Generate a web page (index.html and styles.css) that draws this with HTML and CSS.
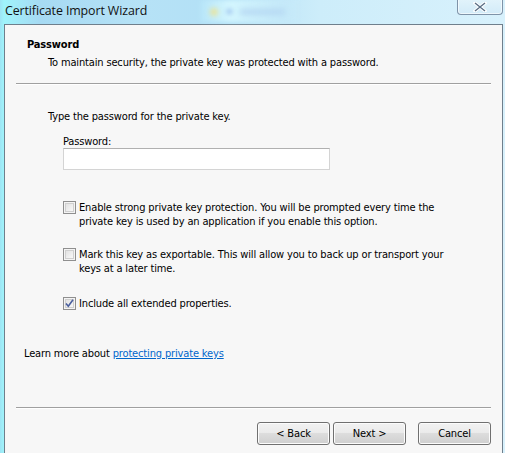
FILE: index.html
```html
<!DOCTYPE html>
<html>
<head>
<meta charset="utf-8">
<link rel="stylesheet" href="styles.css">
</head>
<body>
<div class="window">
  <div class="titlebar">
    <span class="title">Certificate Import Wizard</span>
    <div class="glow"><span class="g1"></span><span class="g2"></span><span class="g3"></span></div>
    <div class="close"><svg width="14" height="10" viewBox="0 0 14 10"><path d="M2 1 L12 9 M12 1 L2 9" stroke="#fff" stroke-width="3.2" stroke-linecap="square"/><path d="M2 1 L12 9 M12 1 L2 9" stroke="#5b6f86" stroke-width="1.4"/></svg></div>
  </div>
  <div class="client">
    <div class="header">
      <div class="h-title">Password</div>
      <div class="h-sub">To maintain security, the private key was protected with a password.</div>
    </div>
    <div class="sep"></div>
    <div class="body">
      <div class="intro">Type the password for the private key.</div>
      <div class="field">
        <label class="lbl">Password:</label>
        <div class="input"></div>
      </div>
      <div class="opt first">
        <span class="cb"></span>
        <span class="otext">Enable strong private key protection. You will be prompted every time the<br>private key is used by an application if you enable this option.</span>
      </div>
      <div class="opt second">
        <span class="cb"></span>
        <span class="otext">Mark this key as exportable. This will allow you to back up or transport your<br>keys at a later time.</span>
      </div>
      <div class="opt third">
        <span class="cb checked"><svg width="11" height="11" viewBox="0 0 11 11"><path d="M2 5.5 L4.3 8.3 L9 1.8" fill="none" stroke="#4a5f9e" stroke-width="1.6"/></svg></span>
        <span class="otext">Include all extended properties.</span>
      </div>
      <div class="learn">Learn more about <a class="link" href="#">protecting private keys</a></div>
    </div>
    <div class="sep"></div>
    <div class="buttons">
      <div class="btn">&lt; Back</div>
      <div class="btn">Next &gt;</div>
      <div class="btn cancel">Cancel</div>
    </div>
  </div>
</div>
</body>
</html>
```
FILE: styles.css
```css
html, body {
  margin: 0;
  padding: 0;
  width: 505px;
  height: 453px;
  overflow: hidden;
}
.window {
  width: 505px;
  height: 453px;
  box-sizing: border-box;
  background: linear-gradient(90deg, #9ee4f4 0px, #9ff4fb 4px, #a6daf3 40px, #b6e2f6 140px, #b3e0f6 220px, #cdedfa 320px, #d8f1fc 505px);
  padding: 0 2px 0 4px;
  display: flex;
  flex-direction: column;
  font-family: Tahoma, "DejaVu Sans Condensed", "Liberation Sans", sans-serif;
  font-size: 11px;
  letter-spacing: -0.15px;
  color: #000;
}
.titlebar {
  height: 24px;
  position: relative;
  display: flex;
  align-items: flex-start;
}
.title {
  font-family: "Open Sans", "Noto Sans", sans-serif;
  font-size: 12.4px;
  color: #111;
  margin: 2px 0 0 1px;
  letter-spacing: -0.1px;
  position: relative;
  z-index: 1;
}
.glow {
  position: absolute;
  left: 196px;
  top: 0;
  width: 100px;
  height: 22px;
  background: linear-gradient(90deg, rgba(190,240,255,0.3), rgba(215,248,255,0.9) 30%, rgba(200,235,250,0.6) 80%, rgba(190,235,250,0));
  filter: blur(2px);
}
.g1 { position: absolute; left: 10px; top: 8px; width: 8px; height: 8px; border-radius: 50%; background: #e9e49a; filter: blur(1.5px); }
.g2 { position: absolute; left: 27px; top: 9px; width: 5px; height: 5px; border-radius: 50%; background: #8fb4e8; filter: blur(1px); }
.g3 { position: absolute; left: 40px; top: 9px; width: 45px; height: 6px; background: #b6d8f2; filter: blur(2px); }
.close {
  position: absolute;
  right: 0;
  top: -1px;
  width: 46px;
  height: 16px;
  box-sizing: border-box;
  border: 1px solid #7f93a8;
  border-top: none;
  border-radius: 0 0 4px 4px;
  background: linear-gradient(#e2f3fb, #d2ebf8);
  display: flex;
  align-items: center;
  justify-content: center;
  box-shadow: inset 0 0 0 1px rgba(255,255,255,0.6);
}
.client {
  flex: 1;
  background: #f7f7f7;
  border: 1px solid #6f7f8c;
  border-bottom: none;
  display: flex;
  flex-direction: column;
}
.header {
  padding: 13px 0 0 22px;
  height: 58px;
  box-sizing: border-box;
}
.h-title {
  font-weight: bold;
  line-height: 13px;
}
.h-sub {
  margin: 5px 0 0 21px;
  line-height: 13px;
}
.sep {
  margin: 0 11px;
  height: 1px;
  background: #a0a0a0;
  border-bottom: 1px solid #fff;
}
.body {
  height: 322px;
  box-sizing: border-box;
  padding: 25px 0 0 0;
}
.intro {
  margin-left: 43px;
  line-height: 13px;
}
.field {
  margin: 12px 0 0 58px;
}
.lbl {
  display: block;
  line-height: 13px;
}
.input {
  margin-top: 0;
  width: 267px;
  height: 22px;
  box-sizing: border-box;
  background: #fff;
  border: 1px solid #d4d4d4;
  border-top-color: #b0b0b0;
}
.opt {
  margin: 31px 0 0 58px;
  display: flex;
  align-items: flex-start;
  gap: 3px;
  line-height: 14px;
}
.opt.second { margin-top: 19px; }
.opt.third { margin-top: 21px; }
.cb {
  flex: none;
  width: 13px;
  height: 13px;
  box-sizing: border-box;
  border: 1px solid #8f8f8f;
  background: linear-gradient(135deg, #dcdcdc, #f4f4f4 70%, #fbfbfb);
  box-shadow: inset 0 0 0 1px #f4f4f4, inset 0 0 0 2px #cfcfcf;
  position: relative;
}
.cb.checked svg {
  position: absolute;
  left: 0;
  top: 0;
}
.learn {
  margin: 36px 0 0 19px;
  line-height: 13px;
}
.link {
  color: #0066cc;
  text-decoration: underline;
}
.buttons {
  display: flex;
  justify-content: flex-end;
  padding: 13px 11px 0 0;
  gap: 3px;
}
.btn {
  width: 73px;
  height: 23px;
  box-sizing: border-box;
  border: 1px solid #707070;
  border-radius: 3px;
  background: linear-gradient(#f2f2f2 0%, #ebebeb 45%, #dddddd 50%, #cfcfcf 100%);
  box-shadow: inset 0 0 0 1px #fcfcfc;
  display: flex;
  align-items: center;
  justify-content: center;
}
.btn.cancel {
  margin-left: 9px;
}
```
